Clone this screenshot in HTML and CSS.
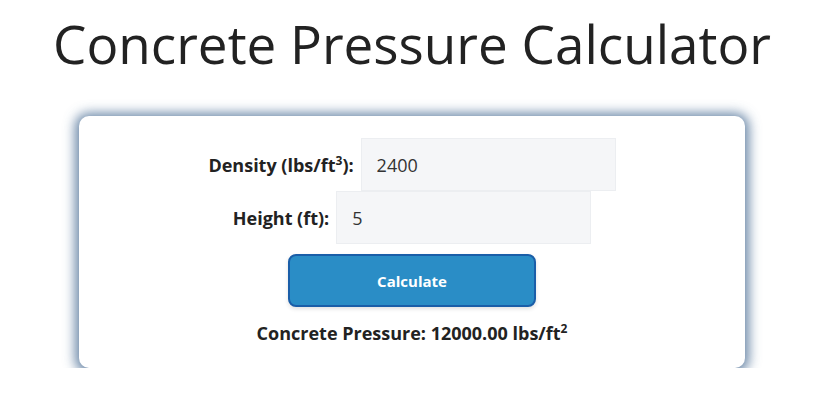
FILE: index.html
```html
<!DOCTYPE html>
<html lang="en">
<head>
  <meta charset="UTF-8" />
  <meta name="viewport" content="width=device-width, initial-scale=1.0" />
  <title>Concrete Pressure Calculator</title>
  <link rel="stylesheet" href="styles.css">
</head>
<body>
  <h1>Concrete Pressure Calculator</h1>
  <div class="calc-card">
    <div class="row">
      <label for="density">Density (lbs/ft<sup>3</sup>):</label>
      <input type="number" id="density" class="field" value="2400">
    </div>
    <div class="row">
      <label for="height">Height (ft):</label>
      <input type="number" id="height" class="field" value="5">
    </div>
    <button class="btn" onclick="calculate()">Calculate</button>
    <div class="result" id="result">Concrete Pressure: 12000.00 lbs/ft<sup>2</sup></div>
  </div>

  <script>
    function calculate() {
      const density = parseFloat(document.getElementById('density').value) || 0;
      const height = parseFloat(document.getElementById('height').value) || 0;
      const pressure = density * height;
      document.getElementById('result').innerHTML =
        `Concrete Pressure: ${pressure.toFixed(2)} lbs/ft<sup>2</sup>`;
    }
  </script>
</body>
</html>
```

FILE: styles.css
```css
body {
  margin: 0;
  padding: 0 8px;
  background-color: #fff;
  font-family: 'Open Sans', 'Noto Sans', sans-serif;
  color: #222;
}
h1 {
  margin: 8px 0 36px;
  font-size: 53px;
  font-weight: 400;
  line-height: 72px;
  text-align: center;
  color: #222;
}
.calc-card {
  width: 666px;
  box-sizing: border-box;
  margin: 0 auto;
  padding: 22px 20px 22px;
  background: #fff;
  border-radius: 10px;
  box-shadow: 0 1px 12px 4px rgba(50, 90, 135, 0.72);
  display: flex;
  flex-direction: column;
  align-items: center;
}
.row {
  display: flex;
  align-items: center;
  justify-content: center;
  gap: 7px;
}
.row label {
  font-size: 18px;
  font-weight: 700;
  color: #222;
}
sup {
  font-size: 12px;
  line-height: 0;
}
.field {
  width: 255px;
  height: 53px;
  box-sizing: border-box;
  padding: 0 15px;
  border: 1px solid #eceef1;
  background: #f5f6f8;
  font-family: inherit;
  font-size: 18px;
  color: #333;
  -moz-appearance: textfield;
}
.field::-webkit-outer-spin-button,
.field::-webkit-inner-spin-button {
  -webkit-appearance: none;
  margin: 0;
}
.btn {
  margin-top: 10px;
  width: 248px;
  height: 53px;
  border: 2px solid #1a5ea8;
  border-radius: 8px;
  background: #2a8dc6;
  color: #fff;
  font-family: inherit;
  font-size: 15px;
  font-weight: 700;
  cursor: pointer;
  box-shadow: 0 2px 4px rgba(0,0,0,0.12);
}
.result {
  margin-top: 14px;
  font-size: 18px;
  line-height: 25px;
  font-weight: 700;
  color: #222;
}
```
